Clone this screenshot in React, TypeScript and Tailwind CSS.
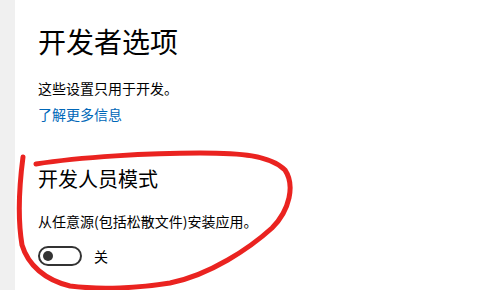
import React from "react";

function Toggle({ on }: { on: boolean }) {
  return (
    <div className="flex items-center gap-3">
      <div className="box-border flex h-[20px] w-[44px] items-center rounded-full border-2 border-[#333] px-[3px]">
        <div className="h-[10px] w-[10px] rounded-full bg-[#333]" />
      </div>
      <span className="text-[14px] leading-[14px] text-black">{on ? "开" : "关"}</span>
    </div>
  );
}

function Annotation() {
  return (
    <svg
      className="pointer-events-none absolute inset-0"
      width="477"
      height="290"
      viewBox="0 0 477 290"
    >
      <path
        d="M23,157 C20,180 17,215 22,245 C28,265 45,280 70,286 C100,290 140,288 170,283 C210,275 250,248 272,228 C290,210 295,185 285,170 C270,155 240,153 200,153 C150,153 80,157 36,164"
        fill="none"
        stroke="#ea2320"
        strokeWidth="5"
        strokeLinecap="round"
        strokeLinejoin="round"
      />
    </svg>
  );
}

export default function App() {
  return (
    <div
      className="relative flex h-[290px] w-[477px] overflow-hidden bg-white"
      style={{ fontFamily: '"Noto Sans CJK SC", "Noto Sans", sans-serif' }}
    >
      <div className="w-[15px] shrink-0 bg-[#f0f0f0]" />
      <div className="flex flex-col pl-[23px] pt-[27px]">
        <h1 className="text-[28px] font-normal leading-[28px] text-black">开发者选项</h1>
        <p className="mt-[26px] text-[14px] leading-[14px] text-black">这些设置只用于开发。</p>
        <a className="mt-[12px] text-[14px] leading-[14px] text-[#0067b8]">了解更多信息</a>
        <h2 className="mt-[48px] text-[20px] font-normal leading-[20px] text-black">开发人员模式</h2>
        <p className="mt-[25px] text-[14px] leading-[14px] text-black">
          从任意源(包括松散文件)安装应用。
        </p>
        <div className="mt-[18px]">
          <Toggle on={false} />
        </div>
      </div>
      <Annotation />
    </div>
  );
}
